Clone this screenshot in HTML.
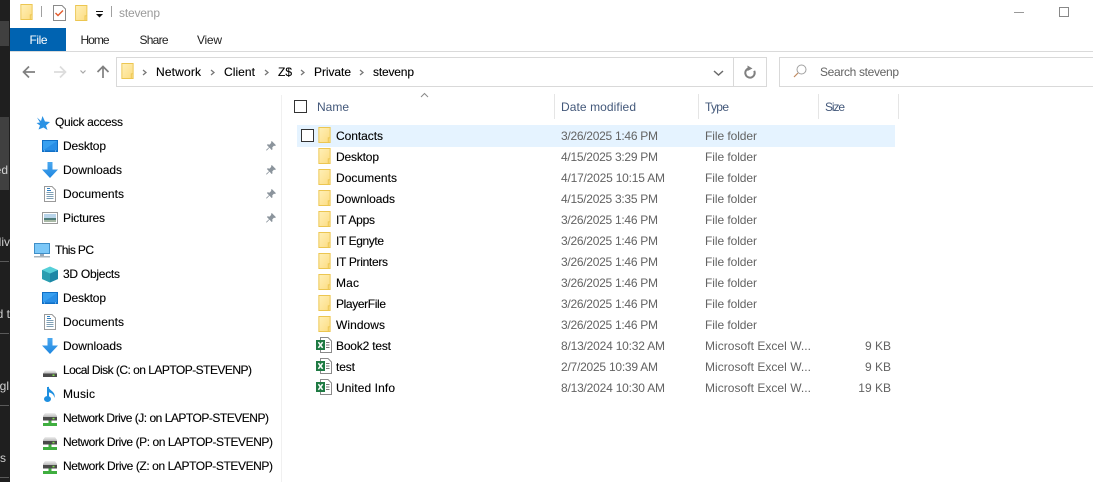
<!DOCTYPE html>
<html><head><meta charset="utf-8"><title>stevenp</title>
<style>
html,body{margin:0;padding:0;background:#fff;width:1093px;height:482px;overflow:hidden}
svg{display:block}
text{font-family:"Liberation Sans",sans-serif;font-size:12px;white-space:pre}
.n{fill:#000;stroke:#000;stroke-width:.12}
.d{fill:#636363}
.h{fill:#43587a}
.r{fill:#000;stroke:#000;stroke-width:.12}
</style></head><body>
<svg width="1093" height="482" viewBox="0 0 1093 482" xmlns="http://www.w3.org/2000/svg">
<defs>
<linearGradient id="fg" x1="0" y1="0" x2="1" y2="1"><stop offset="0" stop-color="#fff0b8"/><stop offset="1" stop-color="#fcdc82"/></linearGradient>
<linearGradient id="blue" x1="0" y1="0" x2="0" y2="1"><stop offset="0" stop-color="#4aa8f0"/><stop offset="1" stop-color="#1f86df"/></linearGradient>
<linearGradient id="disk" x1="0" y1="0" x2="0" y2="1"><stop offset="0" stop-color="#f0f0f0"/><stop offset="1" stop-color="#b8b8b8"/></linearGradient>
<symbol id="folder" viewBox="0 0 13 17" overflow="visible">
<path d="M.5.5H12.5V16.5H.5Z" fill="url(#fg)" stroke="#ecc651"/>
<path d="M10.5 16V11.5H12.5" fill="none" stroke="#ecc651"/>
</symbol>
<symbol id="xl" viewBox="0 0 16 16" overflow="visible">
<path d="M4.5.5H12L15.5 4V15.5H4.5Z" fill="#fff" stroke="#8a8a8a"/>
<path d="M10 5.5H13.5M10 8H13.5M10 10.5H13.5" stroke="#777" fill="none"/>
<rect x="0" y="3" width="9" height="10" fill="#1e7a43"/>
<path d="M2.4 5.2L6.6 10.8M6.6 5.2L2.4 10.8" stroke="#fff" stroke-width="1.5" fill="none"/>
</symbol>
<symbol id="desk" viewBox="0 0 16 12" overflow="visible">
<rect width="16" height="12" fill="#0f6fc6"/>
<rect x="1" y="1" width="14" height="9.5" fill="#38a0f0"/>
<path d="M1 10.5L15 1V10.5Z" fill="#2a8fe6"/>
<path d="M2 11H14" stroke="#cfe8ff" stroke-width=".8" stroke-dasharray="1 10"/>
</symbol>
<symbol id="down" viewBox="0 0 16 16" overflow="visible">
<path d="M5.5 0H10.5V7.5H16L8 16L0 7.5H5.5Z" fill="url(#blue)"/>
</symbol>
<symbol id="docs" viewBox="0 0 12 16" overflow="visible">
<path d="M.5.5H8L11.5 4V15.5H.5Z" fill="#fff" stroke="#9a9a9a"/>
<path d="M2.5 6.5H9.5M2.5 8.5H9.5M2.5 10.5H9.5M2.5 12.5H9.5" stroke="#7f9fb5"/>
<path d="M3 2.5H6M3 4.5H7" stroke="#2f7fc0"/>
</symbol>
<symbol id="pics" viewBox="0 0 16 12" overflow="visible">
<rect x=".5" y=".5" width="15" height="11" fill="#fff" stroke="#9a9a9a"/>
<rect x="2" y="2" width="12" height="4" fill="#b8d4ea"/>
<rect x="2" y="6" width="12" height="2" fill="#4e7d7a"/>
<rect x="2" y="8" width="12" height="2" fill="#a8b9a6"/>
</symbol>
<symbol id="pin" viewBox="0 0 10 10" overflow="visible">
<path d="M5.8 0L10 4.2L8.8 5L8 4.6L6.3 6.4L6.5 8.4L5.6 9L3.5 6.6L.7 9.6L0 9L3 6.2L.9 4L1.6 3.2L3.6 3.6L5.3 1.8L5 1Z" fill="#8b949c"/>
</symbol>
<symbol id="net" viewBox="0 0 15 14" overflow="visible">
<path d="M2 0H12L14 3V4H0V3Z" fill="url(#disk)"/>
<rect x="0" y="4" width="14" height="3.500" fill="#4a4a4a"/>
<rect x="9.500" y="4.800" width="2" height="1.500" fill="#7ee04a"/>
<path d="M5.500 7.500H8.500V10H14V13H0V10H5.500Z" fill="#3fae3f"/>
</symbol>
</defs>

<!-- dark left strip -->
<rect x="0" y="0" width="10" height="482" fill="#1f1f1f"/>
<rect x="0" y="21" width="9" height="25" fill="#404040"/>
<rect x="0" y="117" width="9" height="73" fill="#404040"/>
<rect x="0" y="261" width="9" height="1" fill="#5a5a5a"/>
<rect x="0" y="333" width="9" height="1" fill="#5a5a5a"/>
<rect x="0" y="405" width="9" height="1" fill="#5a5a5a"/>
<rect x="0" y="477" width="9" height="1" fill="#5a5a5a"/>
<text x="8" y="174" text-anchor="end" fill="#d0d0d0">ed</text>
<text x="10" y="246" text-anchor="end" fill="#d0d0d0">liv</text>
<text x="10" y="318" text-anchor="end" fill="#d0d0d0">d t</text>
<text x="9" y="390" text-anchor="end" fill="#d0d0d0">gl</text>
<text x="6" y="462" text-anchor="end" fill="#d0d0d0">s</text>

<!-- title bar -->
<use href="#folder" x="20" y="4" width="13" height="16"/>
<rect x="41" y="6" width="1" height="11" fill="#a0a0a0"/>
<path d="M53.500 5.500H62L65.500 9V20.500H53.500Z" fill="#fff" stroke="#8a8a8a"/>
<path d="M55.500 13L58 15.500L63 10.500" fill="none" stroke="#e2592a" stroke-width="1.400"/>
<use href="#folder" x="75" y="5" width="12.500" height="16"/>
<rect x="96" y="11" width="7" height="1" fill="#111"/>
<path d="M96 14H103L99.500 17.500Z" fill="#111"/>
<rect x="111" y="6" width="1" height="11" fill="#a0a0a0"/>
<text x="119" y="17" fill="#9a9a9a" textLength="41">stevenp</text>
<rect x="1014" y="12" width="10" height="1" fill="#999"/>
<rect x="1059.500" y="7.500" width="9" height="9" fill="none" stroke="#888"/>

<!-- ribbon tabs -->
<rect x="10" y="28" width="56" height="23" fill="#0063b1"/>
<text x="29.500" y="44" fill="#fff" textLength="18">File</text>
<text x="80.500" y="44" fill="#222" textLength="29">Home</text>
<text x="139.500" y="44" fill="#222" textLength="29">Share</text>
<text x="197" y="44" fill="#222" textLength="25">View</text>
<rect x="10" y="51" width="1083" height="1" fill="#dadada"/>

<!-- nav buttons -->
<path d="M35 72H24M29 66.500L23.500 72L29 77.500" fill="none" stroke="#808080" stroke-width="1.700"/>
<path d="M54 72H65M60 66.500L65.500 72L60 77.500" fill="none" stroke="#dcdcdc" stroke-width="1.700"/>
<path d="M80.500 70.500L83 73L85.500 70.500" fill="none" stroke="#a8a8a8" stroke-width="1.200"/>
<path d="M103 78V67M97.500 72L103 66.500L108.500 72" fill="none" stroke="#808080" stroke-width="1.700"/>

<!-- address bar -->
<rect x="116.500" y="57.500" width="650" height="29" fill="#fff" stroke="#d9d9d9"/>
<rect x="733" y="58" width="1" height="28" fill="#d9d9d9"/>
<use href="#folder" x="121" y="63" width="13" height="16"/>
<path d="M143 70L146 72.500L143 75" fill="none" stroke="#777" stroke-width="1.300"/>
<text x="156" y="76" class="r" textLength="45">Network</text>
<path d="M211 70L214 72.500L211 75" fill="none" stroke="#777" stroke-width="1.300"/>
<text x="224" y="76" class="r" textLength="31">Client</text>
<path d="M265 70L268 72.500L265 75" fill="none" stroke="#777" stroke-width="1.300"/>
<text x="278" y="76" class="r" textLength="14">Z$</text>
<path d="M301 70L304 72.500L301 75" fill="none" stroke="#777" stroke-width="1.300"/>
<text x="314" y="76" class="r" textLength="37">Private</text>
<path d="M360 70L363 72.500L360 75" fill="none" stroke="#777" stroke-width="1.300"/>
<text x="373" y="76" class="r" textLength="41">stevenp</text>
<path d="M714 71L718.500 75L723 71" fill="none" stroke="#6a6a6a" stroke-width="1.500"/>
<path d="M754.200 70.800A4.700 4.700 0 1 1 749 68.300" fill="none" stroke="#808080" stroke-width="2"/>
<path d="M747.500 65.500L752.500 68.500L747.500 71Z" fill="#808080"/>

<!-- search -->
<rect x="779.500" y="57.500" width="320" height="29" fill="#fff" stroke="#d9d9d9"/>
<circle cx="801.500" cy="69.500" r="4.500" fill="none" stroke="#a0a0a0"/>
<path d="M798 73L794 77" stroke="#c08a60" stroke-width="1.200"/>
<text x="820" y="76" fill="#636363" textLength="79">Search stevenp</text>

<!-- nav pane border -->
<rect x="281" y="95" width="1" height="387" fill="#f0f0f0"/>

<!-- nav pane -->
<path d="M37 117.500L41 121L42.500 116L45 121.500L50 122L46 125.500L47.500 130L43.500 127.500L38.500 129.500L40 125.500L36.500 123L40 122.500Z" fill="#2b92e4"/>
<text x="55" y="126" class="n" textLength="68">Quick access</text>
<use href="#desk" x="42" y="140" width="16" height="12"/>
<text x="63" y="150" class="n" textLength="43">Desktop</text>
<use href="#pin" x="266" y="141" width="10" height="10"/>
<use href="#down" x="42" y="162" width="16" height="16"/>
<text x="63" y="174" class="n" textLength="59">Downloads</text>
<use href="#pin" x="266" y="165" width="10" height="10"/>
<use href="#docs" x="44" y="186" width="12" height="16"/>
<text x="63" y="198" class="n" textLength="61">Documents</text>
<use href="#pin" x="266" y="189" width="10" height="10"/>
<use href="#pics" x="42" y="212" width="16" height="12"/>
<text x="63" y="222" class="n" textLength="42">Pictures</text>
<use href="#pin" x="266" y="213" width="10" height="10"/>

<rect x="34.500" y="243.500" width="15" height="10" fill="#7cc8f8" stroke="#3f8fc8"/>
<rect x="40" y="254" width="4" height="2" fill="#9ab"/>
<rect x="34" y="256" width="16" height="1.500" fill="#a8b4bc"/>
<text x="55" y="254" class="n" textLength="39">This PC</text>
<path d="M42 270L50 266.500L58 270V279L50 282.500L42 279Z" fill="#55cfd8"/>
<path d="M42 270L50 273.500V282.500L42 279Z" fill="#2a9db0"/>
<path d="M58 270L50 273.500V282.500L58 279Z" fill="#1d87a6"/>
<text x="63" y="278" class="n" textLength="57">3D Objects</text>
<use href="#desk" x="42" y="292" width="16" height="12"/>
<text x="63" y="302" class="n" textLength="43">Desktop</text>
<use href="#docs" x="44" y="314" width="12" height="16"/>
<text x="63" y="326" class="n" textLength="61">Documents</text>
<use href="#down" x="42" y="338" width="16" height="16"/>
<text x="63" y="350" class="n" textLength="59">Downloads</text>
<path d="M45 370.500H55L57 373.500H43Z" fill="url(#disk)"/>
<rect x="43" y="373.500" width="14" height="3.500" fill="#4a4a4a"/>
<rect x="52.500" y="374.500" width="2" height="1.500" fill="#7ee04a"/>
<text x="63" y="374" class="n" textLength="189">Local Disk (C: on LAPTOP-STEVENP)</text>
<path d="M48 387V399" stroke="#1e8fe0" stroke-width="2"/>
<ellipse cx="47.500" cy="399" rx="3.500" ry="3" fill="#1e8fe0"/>
<path d="M48 386C49 391 56 391 54.500 398C53.500 393.500 51 393 48 392Z" fill="#1e8fe0"/>
<text x="63" y="398" class="n" textLength="32">Music</text>
<use href="#net" x="43" y="413" width="15" height="14"/>
<text x="63" y="422" class="n" textLength="206">Network Drive (J: on LAPTOP-STEVENP)</text>
<use href="#net" x="43" y="437" width="15" height="14"/>
<text x="63" y="446" class="n" textLength="210">Network Drive (P: on LAPTOP-STEVENP)</text>
<use href="#net" x="43" y="461" width="15" height="14"/>
<text x="63" y="470" class="n" textLength="210">Network Drive (Z: on LAPTOP-STEVENP)</text>

<!-- header -->
<path d="M421 97L424.500 93.500L428 97" fill="none" stroke="#8a8a8a"/>
<rect x="294.500" y="100.500" width="12" height="12" fill="#fff" stroke="#333"/>
<text x="317" y="111" class="h" textLength="32">Name</text>
<rect x="554" y="94" width="1" height="25" fill="#e5e5e5"/>
<text x="561" y="111" class="h" textLength="75">Date modified</text>
<rect x="698" y="94" width="1" height="25" fill="#e5e5e5"/>
<text x="705" y="111" class="h" textLength="24">Type</text>
<rect x="818" y="94" width="1" height="25" fill="#e5e5e5"/>
<text x="825" y="111" class="h" textLength="20">Size</text>
<rect x="898" y="94" width="1" height="25" fill="#e5e5e5"/>

<!-- rows -->
<rect x="297" y="125" width="598" height="22" fill="#e5f3ff"/>
<rect x="301.500" y="129.500" width="12" height="12" fill="#fff" stroke="#333"/>

<use href="#folder" x="318" y="127" width="13" height="16"/>
<text x="336" y="140" class="r" textLength="47">Contacts</text>
<text x="561" y="140" class="d" textLength="97">3/26/2025 1:46 PM</text>
<text x="705" y="140" class="d" textLength="52">File folder</text>

<use href="#folder" x="318" y="148" width="13" height="16"/>
<text x="336" y="161" class="r" textLength="43">Desktop</text>
<text x="561" y="161" class="d" textLength="97">4/15/2025 3:29 PM</text>
<text x="705" y="161" class="d" textLength="52">File folder</text>

<use href="#folder" x="318" y="169" width="13" height="16"/>
<text x="336" y="182" class="r" textLength="61">Documents</text>
<text x="561" y="182" class="d" textLength="104">4/17/2025 10:15 AM</text>
<text x="705" y="182" class="d" textLength="52">File folder</text>

<use href="#folder" x="318" y="190" width="13" height="16"/>
<text x="336" y="203" class="r" textLength="59">Downloads</text>
<text x="561" y="203" class="d" textLength="97">4/15/2025 3:35 PM</text>
<text x="705" y="203" class="d" textLength="52">File folder</text>

<use href="#folder" x="318" y="211" width="13" height="16"/>
<text x="336" y="224" class="r" textLength="39">IT Apps</text>
<text x="561" y="224" class="d" textLength="97">3/26/2025 1:46 PM</text>
<text x="705" y="224" class="d" textLength="52">File folder</text>

<use href="#folder" x="318" y="232" width="13" height="16"/>
<text x="336" y="245" class="r" textLength="48">IT Egnyte</text>
<text x="561" y="245" class="d" textLength="97">3/26/2025 1:46 PM</text>
<text x="705" y="245" class="d" textLength="52">File folder</text>

<use href="#folder" x="318" y="253" width="13" height="16"/>
<text x="336" y="266" class="r" textLength="52">IT Printers</text>
<text x="561" y="266" class="d" textLength="97">3/26/2025 1:46 PM</text>
<text x="705" y="266" class="d" textLength="52">File folder</text>

<use href="#folder" x="318" y="274" width="13" height="16"/>
<text x="336" y="287" class="r" textLength="23">Mac</text>
<text x="561" y="287" class="d" textLength="97">3/26/2025 1:46 PM</text>
<text x="705" y="287" class="d" textLength="52">File folder</text>

<use href="#folder" x="318" y="295" width="13" height="16"/>
<text x="336" y="308" class="r" textLength="50">PlayerFile</text>
<text x="561" y="308" class="d" textLength="97">3/26/2025 1:46 PM</text>
<text x="705" y="308" class="d" textLength="52">File folder</text>

<use href="#folder" x="318" y="316" width="13" height="16"/>
<text x="336" y="329" class="r" textLength="49">Windows</text>
<text x="561" y="329" class="d" textLength="97">3/26/2025 1:46 PM</text>
<text x="705" y="329" class="d" textLength="52">File folder</text>

<use href="#xl" x="316" y="337" width="16" height="16"/>
<text x="336" y="350" class="r" textLength="55">Book2 test</text>
<text x="561" y="350" class="d" textLength="104">8/13/2024 10:32 AM</text>
<text x="705" y="350" class="d" textLength="106">Microsoft Excel W...</text>
<text x="891" y="350" class="d" text-anchor="end">9 KB</text>

<use href="#xl" x="316" y="358" width="16" height="16"/>
<text x="336" y="371" class="r" textLength="19">test</text>
<text x="561" y="371" class="d" textLength="97">2/7/2025 10:39 AM</text>
<text x="705" y="371" class="d" textLength="106">Microsoft Excel W...</text>
<text x="891" y="371" class="d" text-anchor="end">9 KB</text>

<use href="#xl" x="316" y="379" width="16" height="16"/>
<text x="336" y="392" class="r" textLength="59">United Info</text>
<text x="561" y="392" class="d" textLength="104">8/13/2024 10:30 AM</text>
<text x="705" y="392" class="d" textLength="106">Microsoft Excel W...</text>
<text x="891" y="392" class="d" text-anchor="end">19 KB</text>
</svg>
</body></html>
